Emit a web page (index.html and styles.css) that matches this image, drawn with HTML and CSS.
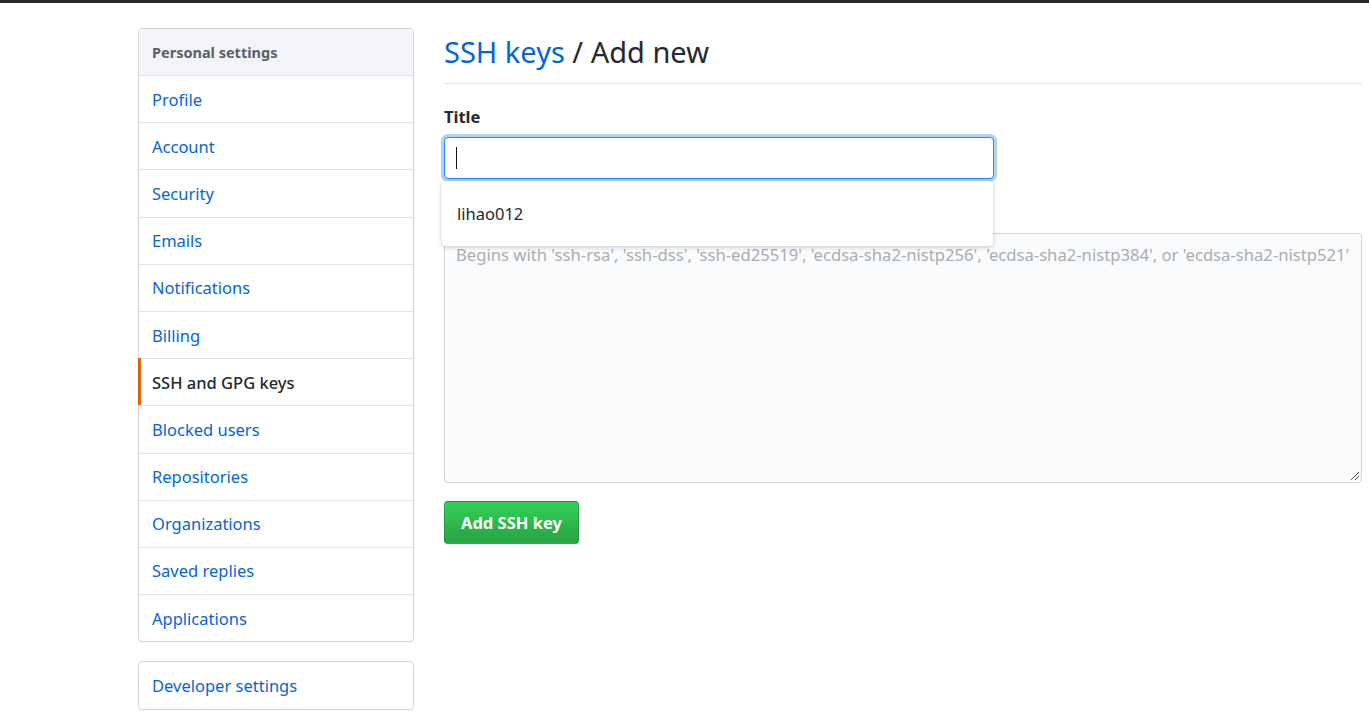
FILE: index.html
```html
<!DOCTYPE html>
<html lang="en">
<head>
<meta charset="utf-8">
<title>SSH keys / Add new</title>
<link rel="stylesheet" href="styles.css">
</head>
<body>
<div class="topbar"></div>
<div class="page">
  <aside class="side">
    <nav class="menu">
      <div class="menu-head">Personal settings</div>
      <a class="menu-item" href="#">Profile</a>
      <a class="menu-item" href="#">Account</a>
      <a class="menu-item" href="#">Security</a>
      <a class="menu-item" href="#">Emails</a>
      <a class="menu-item" href="#">Notifications</a>
      <a class="menu-item" href="#">Billing</a>
      <a class="menu-item selected" href="#">SSH and GPG keys</a>
      <a class="menu-item" href="#">Blocked users</a>
      <a class="menu-item" href="#">Repositories</a>
      <a class="menu-item" href="#">Organizations</a>
      <a class="menu-item" href="#">Saved replies</a>
      <a class="menu-item" href="#">Applications</a>
    </nav>
    <nav class="menu">
      <a class="menu-item first" href="#">Developer settings</a>
    </nav>
  </aside>
  <main class="main">
    <h1 class="subhead"><a href="#">SSH keys</a> / Add new</h1>
    <form class="form">
      <label class="label" for="title">Title</label>
      <div class="field">
        <div class="input"><span class="caret"></span></div>
        <div class="suggest"><div class="suggest-item">lihao012</div></div>
      </div>
      <div class="textarea">Begins with 'ssh-rsa', 'ssh-dss', 'ssh-ed25519', 'ecdsa-sha2-nistp256', 'ecdsa-sha2-nistp384', or 'ecdsa-sha2-nistp521'
        <svg class="grip" width="12" height="12" viewBox="0 0 12 12"><path d="M11 3 L3 11 M11 7 L7 11" stroke="#555" stroke-width="1" fill="none"/></svg>
      </div>
      <button type="button" class="btn">Add SSH key</button>
    </form>
  </main>
</div>
</body>
</html>
```

FILE: styles.css
```css
* { box-sizing: border-box; }
html, body { margin: 0; padding: 0; background: #fff; }
body {
  font-family: "Noto Sans", "Open Sans", sans-serif;
  color: #24292e;
  font-size: 16.5px;
}
a { text-decoration: none; }
.topbar { height: 3px; background: #24292e; }
.page {
  display: grid;
  grid-template-columns: 276px 1fr;
  column-gap: 30px;
  padding: 25px 7px 0 138px;
}
.side { display: flex; flex-direction: column; gap: 19px; }
.menu {
  border: 1px solid #d1d5da;
  border-radius: 4px;
  background: #fff;
  display: flex;
  flex-direction: column;
}
.menu-head {
  height: 46px;
  display: flex;
  align-items: center;
  padding: 0 13px;
  background: #f3f4f7;
  color: #586069;
  font-weight: 700;
  font-size: 14.5px;
  border-radius: 4px 4px 0 0;
}
.menu-item {
  position: relative;
  height: 47.2px;
  display: flex;
  align-items: center;
  padding: 0 13px;
  border-top: 1px solid #e1e4e8;
  color: #0366d6;
  font-size: 16.5px;
}
.menu-item.first { border-top: 0; height: 47px; }
.menu-item.selected { color: #24292e; font-weight: 500; }
.menu-item.selected::before {
  content: "";
  position: absolute;
  left: -1px;
  top: -1px;
  bottom: 0;
  width: 3px;
  background: #e36209;
}
.main { min-width: 0; }
.subhead {
  margin: 5px 0 0;
  padding-bottom: 12px;
  border-bottom: 1px solid #e1e4e8;
  font-size: 29px;
  font-weight: 400;
  line-height: 38px;
  color: #24292e;
}
.subhead a { color: #0366d6; }
.form { display: flex; flex-direction: column; align-items: flex-start; }
.label {
  margin-top: 21px;
  font-weight: 700;
  font-size: 16.5px;
  line-height: 24px;
  color: #24292e;
}
.field { position: relative; width: 550px; margin-top: 8px; }
.input {
  height: 42px;
  border: 1px solid #2188ff;
  border-radius: 4px;
  box-shadow: 0 0 0 3px rgba(3, 102, 214, 0.3);
  background: #fff;
  display: flex;
  align-items: center;
  padding-left: 11px;
}
.caret { width: 1px; height: 22px; background: #111; }
.suggest {
  position: absolute;
  left: -2px;
  top: 44px;
  width: 551px;
  height: 65px;
  background: #fff;
  border-radius: 4px;
  box-shadow: 0 1px 5px rgba(0, 0, 0, 0.22);
  z-index: 5;
  display: flex;
  align-items: center;
  padding-left: 15px;
}
.suggest-item { font-size: 16.5px; color: #24292e; }
.textarea {
  position: relative;
  margin-top: 54px;
  width: 100%;
  height: 250px;
  background: #fafbfc;
  border: 1px solid #d1d5da;
  border-radius: 4px;
  color: #a8adb3;
  font-size: 16.65px;
  line-height: 24px;
  padding: 9px 11px;
  white-space: nowrap;
  overflow: hidden;
}
.grip { position: absolute; right: 1px; bottom: 1px; }
.btn {
  margin-top: 18px;
  height: 43px;
  padding: 0 16px;
  border: 1px solid rgba(27, 31, 35, 0.2);
  border-radius: 4px;
  background: linear-gradient(#34d058, #28a745 90%);
  color: #fff;
  font-family: "Noto Sans", "Open Sans", sans-serif;
  font-weight: 700;
  font-size: 16.5px;
}
```
